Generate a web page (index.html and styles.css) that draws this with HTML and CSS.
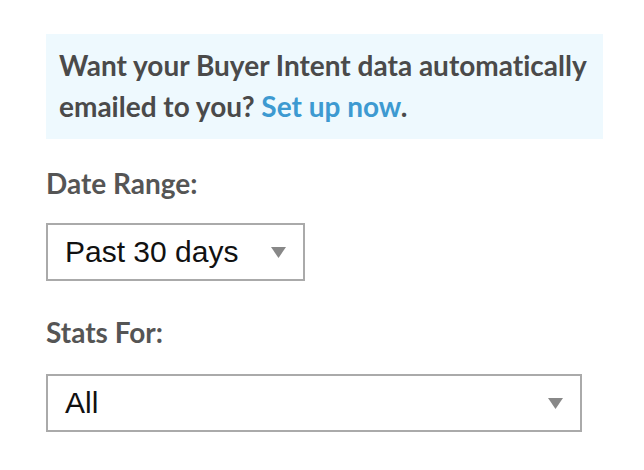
FILE: index.html
```html
<!DOCTYPE html>
<html>
<head>
<meta charset="utf-8">
<link rel="stylesheet" href="styles.css">
</head>
<body>
<div class="page">
  <div class="banner">Want your Buyer Intent data automatically emailed to you? <a class="link" href="#">Set up now</a>.</div>
  <div class="field field-date">
    <div class="label">Date Range:</div>
    <div class="select select-date">
      <span class="value">Past 30 days</span>
      <svg class="arrow" width="15" height="11" viewBox="0 0 15 11"><polygon points="0,0 15,0 7.5,11" fill="#888"/></svg>
    </div>
  </div>
  <div class="field field-stats">
    <div class="label">Stats For:</div>
    <div class="select select-stats">
      <span class="value">All</span>
      <svg class="arrow" width="15" height="11" viewBox="0 0 15 11"><polygon points="0,0 15,0 7.5,11" fill="#888"/></svg>
    </div>
  </div>
</div>
</body>
</html>
```
FILE: styles.css
```css
html, body {
  margin: 0;
  padding: 0;
  background: #fff;
}
.page {
  padding: 34px 0 0 46px;
  font-family: Lato, "Liberation Sans", sans-serif;
  font-variant-ligatures: none;
}
.banner {
  box-sizing: border-box;
  width: 557px;
  height: 105px;
  background: #eef9fe;
  padding: 11px 0 0 13px;
  font-weight: 700;
  font-size: 28px;
  line-height: 41px;
  color: #4a4a4a;
}
.link {
  color: #3d9ad1;
  text-decoration: none;
}
.field-date {
  margin-top: 27px;
}
.field-stats {
  margin-top: 34px;
}
.label {
  font-weight: 700;
  font-size: 28px;
  line-height: 34px;
  color: #555;
}
.field-date .label {
  margin-bottom: 23px;
}
.field-stats .label {
  margin-bottom: 25px;
}
.select {
  box-sizing: border-box;
  height: 58px;
  border: 2px solid #aaa;
  background: #fff;
  display: flex;
  align-items: center;
  justify-content: space-between;
  padding: 0 17px 0 17px;
}
.select-date {
  width: 259px;
}
.select-stats {
  width: 536px;
}
.value {
  font-family: "Liberation Sans", Arial, sans-serif;
  font-size: 30px;
  color: #111;
}
.arrow {
  display: block;
}
```
